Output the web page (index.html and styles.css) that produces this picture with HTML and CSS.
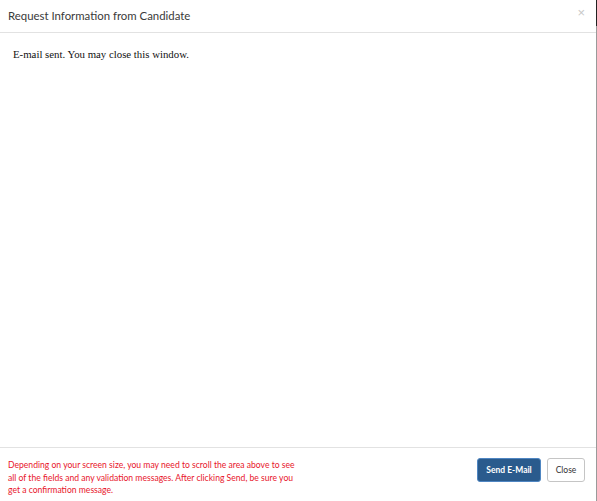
FILE: index.html
```html
<!DOCTYPE html>
<html>
<head>
    <title>Request Information from Candidate</title>
    <link rel="stylesheet" href="styles.css">
</head>
<body>
    <div class="modal">
        <div class="modal-header">
            <h4 class="modal-title">Request Information from Candidate</h4>
            <button class="close-x" type="button">&times;</button>
        </div>
        <div class="modal-body">
            <p class="sent-msg">E-mail sent. You may close this window.</p>
        </div>
        <div class="modal-footer">
            <p class="footer-note">Depending on your screen size, you may need to scroll the area above to see all of the fields and any validation messages. After clicking Send, be sure you get a confirmation message.</p>
            <div class="footer-buttons">
                <button class="btn btn-primary" type="button">Send E-Mail</button>
                <button class="btn btn-default" type="button">Close</button>
            </div>
        </div>
    </div>
</body>
</html>
```

FILE: styles.css
```css
html, body {
    margin: 0;
    padding: 0;
    height: 100%;
}

body {
    font-family: Lato, "Open Sans", sans-serif;
    background-color: #fff;
}

.modal {
    display: flex;
    flex-direction: column;
    height: 501px;
    width: 596px;
    border-right: 1px solid #9a9a9a;
    position: relative;
}

.modal::after {
    content: "";
    position: absolute;
    top: 0;
    right: -1px;
    width: 1px;
    height: 26px;
    background-color: #222;
}

.modal-header {
    display: flex;
    justify-content: space-between;
    align-items: center;
    height: 32px;
    padding: 0 11px 0 8px;
    border-bottom: 1px solid #e2e2e2;
}

.modal-title {
    margin: 0;
    font-size: 11.4px;
    font-weight: normal;
    color: #3a3a3a;
    position: relative;
    top: -1px;
}

.close-x {
    border: none;
    background: none;
    padding: 0;
    font-size: 13px;
    line-height: 1;
    color: #c8c8c8;
    font-family: Arial, sans-serif;
    position: relative;
    top: -4px;
}

.modal-body {
    flex: 1;
    padding: 15px 13px;
}

.sent-msg {
    margin: 0;
    font-family: "Liberation Serif", "Times New Roman", serif;
    font-size: 10.8px;
    color: #111;
}

.modal-footer {
    display: flex;
    justify-content: space-between;
    align-items: flex-start;
    height: 53px;
    padding: 0 11px 0 8px;
    border-top: 1px solid #e2e2e2;
}

.footer-note {
    margin: 11px 0 0 0;
    width: 292px;
    font-size: 8.6px;
    line-height: 12.5px;
    color: #e8152b;
}

.footer-buttons {
    display: flex;
    gap: 6px;
    margin-top: 10px;
}

.btn {
    font-family: Lato, "Open Sans", sans-serif;
    font-size: 8.5px;
    height: 24px;
    border-radius: 3px;
    padding: 0;
    white-space: nowrap;
    cursor: pointer;
}

.btn-primary {
    width: 64px;
    background-color: #2a5b8d;
    border: 1px solid #4f86c2;
    color: #fff;
    font-weight: bold;
}

.btn-default {
    width: 38px;
    background-color: #fff;
    border: 1px solid #c5c5c5;
    color: #333;
}
```
